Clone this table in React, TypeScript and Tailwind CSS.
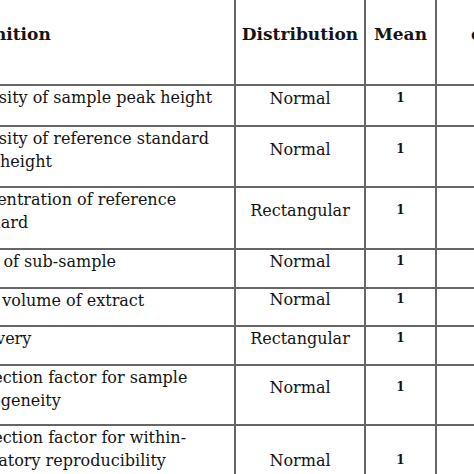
import React from 'react';

interface Row {
  definition: string;
  distribution: string;
  mean: string;
  sd: string;
  height: string;
}

const rows: Row[] = [
  { definition: 'Intensity of sample peak height', distribution: 'Normal', mean: '1', sd: '0.012', height: 'h-[41px]' },
  { definition: 'Intensity of reference standard peak height', distribution: 'Normal', mean: '1', sd: '0.010', height: 'h-[61px]' },
  { definition: 'Concentration of reference standard', distribution: 'Rectangular', mean: '1', sd: '0.006', height: 'h-[62px]' },
  { definition: 'Mass of sub-sample', distribution: 'Normal', mean: '1', sd: '0.001', height: 'h-[39px]' },
  { definition: 'Final volume of extract', distribution: 'Normal', mean: '1', sd: '0.002', height: 'h-[38px]' },
  { definition: 'Recovery', distribution: 'Rectangular', mean: '1', sd: '0.035', height: 'h-[39px]' },
  { definition: 'Correction factor for sample homogeneity', distribution: 'Normal', mean: '1', sd: '0.020', height: 'h-[60px]' },
  { definition: 'Correction factor for within-laboratory reproducibility', distribution: 'Normal', mean: '1', sd: '0.045', height: 'h-[86px]' },
];

const cell = 'border-r-2 border-b-2 border-[#666]';

const App: React.FC = () => {
  return (
    <div className="w-[474px] h-[474px] overflow-hidden bg-white text-[#141414] font-['DejaVu_Serif',serif] text-[16px] leading-[23px]">
      <div className="ml-[-60px] grid grid-cols-[296px_130px_71px_220px]">
        {/* header */}
        <div className={`${cell} h-[86px] flex items-center pl-[16px] pb-[15px] text-[17px] font-bold`}>Definition</div>
        <div className={`${cell} h-[86px] flex items-center justify-center pb-[15px] text-[17px] font-bold`}>Distribution</div>
        <div className={`${cell} h-[86px] flex items-center justify-center pb-[15px] text-[17px] font-bold`}>Mean</div>
        <div className={`${cell} h-[86px] flex items-center pl-[34px] pb-[15px] text-[17px] font-bold`}>
          <div className="w-max text-center">
            Standard
            <br />
            coefficient of
            <br />
            variation
          </div>
        </div>

        {rows.map((r) => (
          <React.Fragment key={r.definition}>
            <div className={`${cell} ${r.height} pl-[16px] pr-1`}>{r.definition}</div>
            <div className={`${cell} ${r.height} flex items-center justify-center pb-[15px]`}>{r.distribution}</div>
            <div className={`${cell} ${r.height} flex items-center justify-center pb-[15px]`}>
              <span className="text-[12px] font-bold">{r.mean}</span>
            </div>
            <div className={`${cell} ${r.height} flex items-center justify-center pb-[15px]`}>{r.sd}</div>
          </React.Fragment>
        ))}
      </div>
    </div>
  );
};

export default App;
